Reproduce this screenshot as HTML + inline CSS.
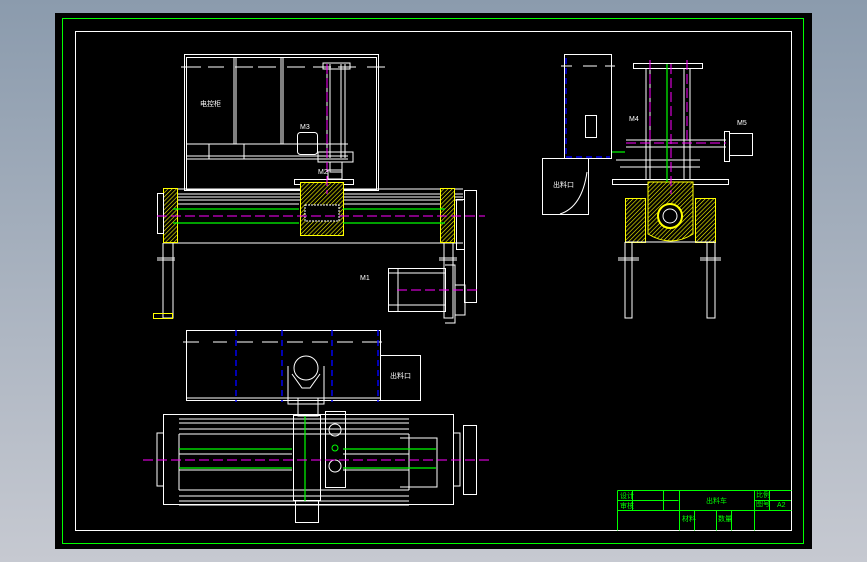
<!DOCTYPE html><html><head><style>
html,body{margin:0;padding:0;width:867px;height:562px;overflow:hidden;background:linear-gradient(#8b9bad,#c6c9d1);}
svg{position:absolute;left:0;top:0}
text{font-family:"Liberation Sans","Noto Sans CJK SC",sans-serif;font-size:7px;fill:#fff}
</style></head><body>
<svg width="867" height="562" viewBox="0 0 867 562">
<defs>
<pattern id="h" width="3" height="3" patternUnits="userSpaceOnUse" patternTransform="rotate(45)">
<rect width="3" height="3" fill="#000"/><line x1="0" y1="0" x2="0" y2="3" stroke="#ff0" stroke-width="1.2"/>
</pattern>
</defs>
<rect x="55" y="13" width="757" height="536" fill="#000"/>
<rect x="62.5" y="18.5" width="741" height="525" fill="none" stroke="#0f0" stroke-width="1"/>
<rect x="75.5" y="31.5" width="716" height="499" fill="none" stroke="#fff" stroke-width="1"/>
<g fill="none" stroke="#fff" stroke-width="1">
<rect x="184.5" y="54.5" width="194" height="136"/>
<rect x="186.5" y="57.5" width="190" height="132"/>
<path d="M181 67h20M208 67h16M235 67h18M258 67h18M287 67h18M313 67h18M338 67h18M367 67h18"/>
<path d="M234 58v86M236 58v86M281 58v86M283 58v86M186 144h162M186 159h162M186 156h162M209 144v15M244 144v15"/>
<rect x="297.5" y="132.5" width="20" height="22" rx="3"/>
<path d="M327 64v94M330 64v94M341 64v94M345 64v94M323 63h27v6h-27z"/>
<path d="M318 152h35v10h-35zM330 162h12v10h-12zM328 170h14v9h-14z"/>
<rect x="294.5" y="179.5" width="59" height="5"/>
<path d="M163 189h300M163 194h300M163 197h300M163 200h300M163 243h300M173 204h126M343 204h111"/>
<rect x="163.5" y="188.5" width="14" height="54" fill="url(#h)" stroke="#ff0"/>
<rect x="440.5" y="188.5" width="14" height="54" fill="url(#h)" stroke="#ff0"/>
<rect x="157.5" y="193.5" width="6" height="40"/>
<rect x="300.5" y="182.5" width="43" height="53" fill="url(#h)" stroke="#ff0"/>
<rect x="305" y="205" width="34" height="16" fill="#000" stroke="#fff" stroke-dasharray="2,1"/>
<rect x="464.5" y="190.5" width="12" height="112"/>
<rect x="456.5" y="199.5" width="8" height="50"/>
<path d="M163 243v75h10v-75M444 243v75h9v-75M157 258h18M157 260h18M439 258h18M439 260h18"/>
<rect x="153.5" y="313.5" width="19" height="5" stroke="#ff0"/>
<rect x="388.5" y="268.5" width="57" height="43"/>
<path d="M398 268v43M388 273h57M388 305h57M445 265h10v58h-10M455 285h10v30h-10"/>
<rect x="564.5" y="54.5" width="47" height="104"/>
<path d="M561 66h11M583 66h14M605 66h10"/>
<rect x="542.5" y="158.5" width="46" height="56"/>
<path d="M587 172q-5 35-27 42"/>
<rect x="585.5" y="115.5" width="11" height="22"/>
<rect x="633.5" y="63.5" width="69" height="5"/>
<path d="M646 68v112M650 68v112M684 68v112M690 68v112M626 140h100M626 147h100M616 160h84M620 167h80"/>
<rect x="724.5" y="131.5" width="5" height="30"/>
<rect x="729.5" y="133.5" width="23" height="22"/>
<rect x="612.5" y="179.5" width="116" height="5"/>
<rect x="625.5" y="198.5" width="20" height="44" fill="url(#h)" stroke="#ff0"/>
<rect x="695.5" y="198.5" width="20" height="44" fill="url(#h)" stroke="#ff0"/>
<path d="M648 182h45v52q-22 14-45 0z" fill="url(#h)" stroke="#ff0"/>
<circle cx="670" cy="216" r="12" fill="#000" stroke="#ff0" stroke-width="2"/>
<circle cx="670" cy="216" r="7"/>
<path d="M625 242h90M625 242v76h7v-76M707 242v76h8v-76M618 258h21M618 260h21M700 258h21M700 260h21"/>
<rect x="186.5" y="330.5" width="194" height="70"/>
<path d="M186 398h194M183 342h16M213 342h14M237 342h16M262 342h16M287 342h16M312 342h16M337 342h16M362 342h20"/>
<rect x="380.5" y="355.5" width="40" height="45"/>
<circle cx="306" cy="368" r="12"/>
<path d="M288 366v38h36v-38M292 374l10 14h8l10-14M298 398h20v18h-20z"/>
<rect x="163.5" y="414.5" width="290" height="90"/>
<path d="M179 419h230M179 423h230M179 429h230M179 434h230M179 490h230M179 496h230M179 501h230M179 505h230"/>
<path d="M179 434v56M409 434v56M179 454h113M343 454h66M179 470h113M343 470h66"/>
<rect x="293.5" y="415.5" width="27" height="85"/>
<rect x="325.5" y="411.5" width="20" height="76"/>
<path d="M400 438h37v49h-37"/>
<circle cx="335" cy="430" r="6"/><circle cx="335" cy="466" r="6"/><circle cx="335" cy="448" r="3" stroke="#0f0"/>
<rect x="463.5" y="425.5" width="13" height="69"/>
<path d="M163 433h-6v53h6M453 433h7v53h-7"/>
<rect x="295.5" y="500.5" width="23" height="22"/>
</g>
<g stroke="#0f0" stroke-width="1.2" fill="none">
<path d="M173 209h126M173 223h126M343 209h102M343 223h102"/>
<path d="M179 449h113M179 468h113M343 449h93M343 468h93"/>
<path d="M667 64v118M305 416v85"/>
<path d="M612 152h13"/>
</g>
<g stroke="#f0f" stroke-width="1" fill="none" stroke-dasharray="10,4">
<path d="M157 216h328M397 290h82M143 460h350M671 64v130M327 64v130M650 60v80M687 60v80M626 143h100"/>
</g>
<g stroke="#00f" stroke-width="1.4" fill="none" stroke-dasharray="6,4">
<path d="M236 330v72M282 330v72M332 330v72M378 330v72M566 58v98M566 157h44"/>
</g>
<g stroke="#0f0" stroke-width="1" fill="none">
<path d="M617.5 490.5h174M617.5 500.5h61M754 500.5h37M617.5 510.5h174M617.5 490.5v40M632.5 490.5v20M663.5 490.5v20M679.5 490.5v40M694.5 510.5v20M716.5 510.5v20M731.5 510.5v20M754.5 490.5v40M769.5 490.5v20"/>
</g>
<g style="font-size:6px">
<text x="620" y="498" style="fill:#0f0">设计</text>
<text x="620" y="508" style="fill:#0f0">审核</text>
<text x="706" y="503" style="fill:#0f0">出料车</text>
<text x="756" y="497" style="fill:#0f0">比例</text>
<text x="756" y="506" style="fill:#0f0">图号</text>
<text x="777" y="507" style="fill:#0f0">A2</text>
<text x="682" y="521" style="fill:#0f0">材料</text>
<text x="718" y="521" style="fill:#0f0">数量</text>
<text x="200" y="106">电控柜</text>
<text x="300" y="129">M3</text>
<text x="318" y="174">M2</text>
<text x="360" y="280">M1</text>
<text x="553" y="187">出料口</text>
<text x="629" y="121">M4</text>
<text x="737" y="125">M5</text>
<text x="390" y="378">出料口</text>
</g>
</svg>
</body></html>
